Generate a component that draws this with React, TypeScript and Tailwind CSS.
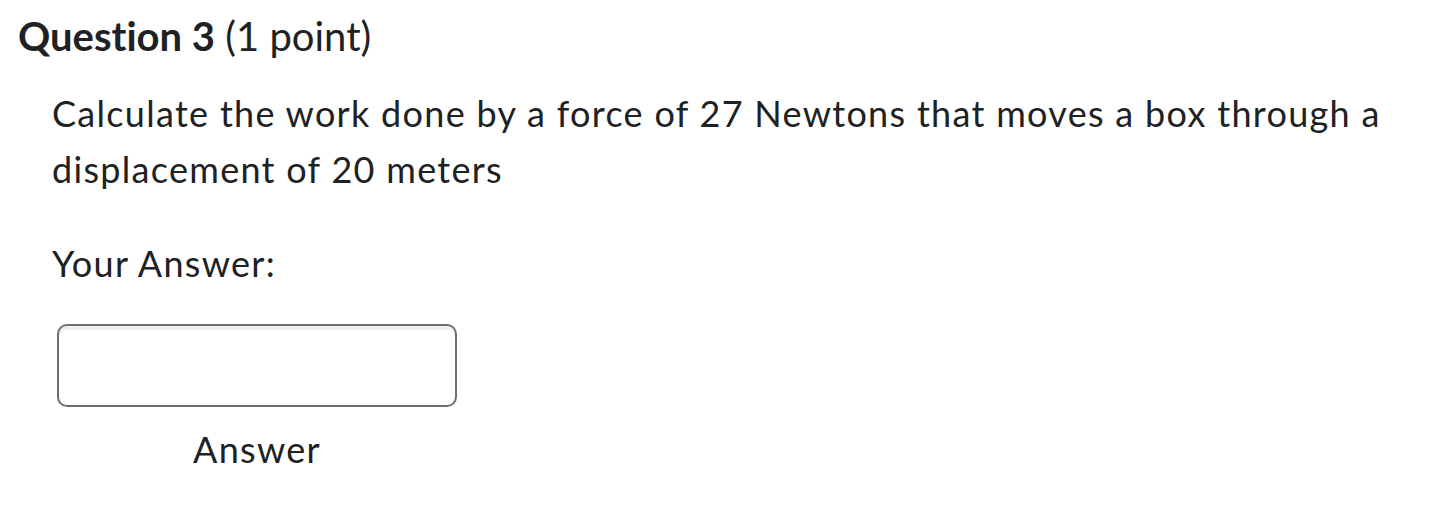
export default function App() {
  return (
    <div className="w-[1436px] h-[532px] bg-white text-[#202122] font-['Lato',sans-serif] [font-variant-ligatures:none] overflow-hidden">
      <div className="pl-[18px] pt-[12px]">
        <h2 className="text-[40px] leading-[48px]">
          <span className="font-bold">Question 3</span> (1 point)
        </h2>
      </div>
      <div className="pl-[52px] pt-[25px] pr-[20px] text-[36px] leading-[56px] tracking-[1.3px]">
        <p>Calculate the work done by a force of 27 Newtons that moves a box through a displacement of 20 meters</p>
        <p className="mt-[38px]">Your Answer:</p>
        <div className="mt-[33px] ml-[5px] w-[400px] flex flex-col items-center">
          <input
            type="text"
            aria-label="Answer"
            className="w-[400px] h-[83px] rounded-[10px] border-2 border-[#6b7075] bg-white shadow-[inset_0_4px_0_#eef0f2] outline-none"
          />
          <label className="mt-[14px]">Answer</label>
        </div>
      </div>
    </div>
  );
}
